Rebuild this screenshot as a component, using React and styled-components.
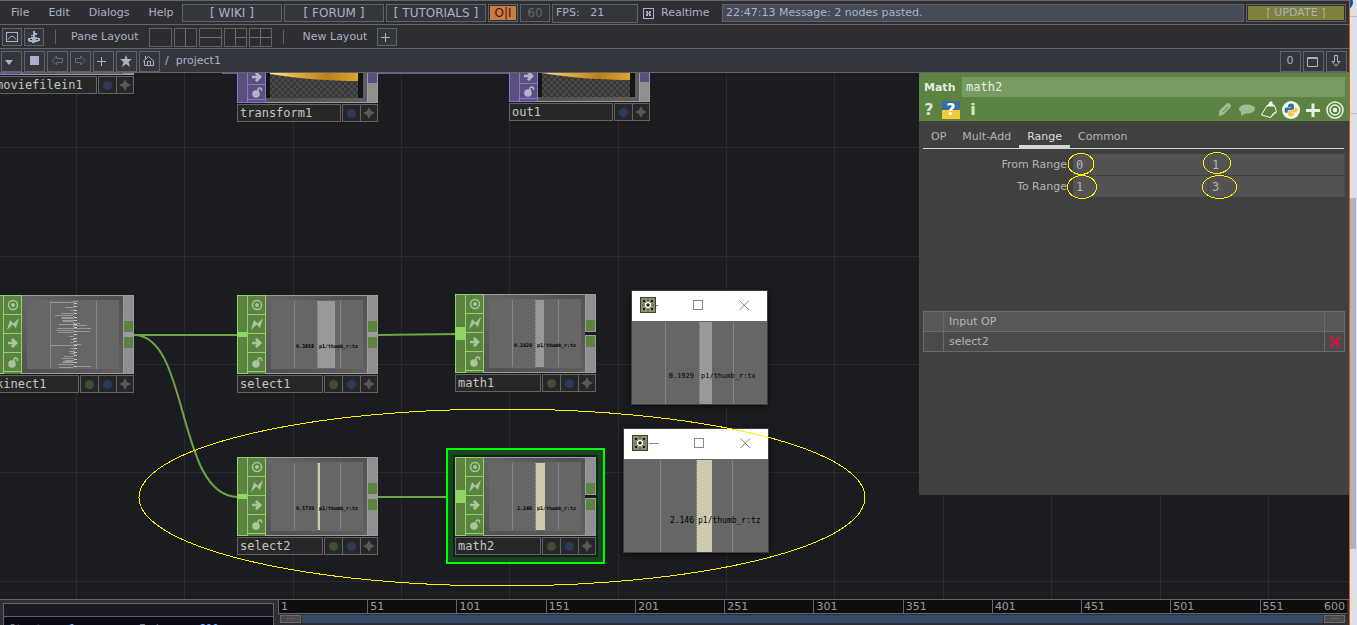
import React from "react";
import styled, { createGlobalStyle } from "styled-components";

const SANS = `"DejaVu Sans", Verdana, sans-serif`;
const MONO = `"DejaVu Sans Mono", monospace`;

const families = {
    chop: { fill: "#5c8341", edge: "#8fd566", icon: "#a9c69a" },
    top: { fill: "#5a5080", edge: "#8b76cc", icon: "#b7b0d0" },
};

const gridX = [76, 184, 293, 401, 509, 618, 726, 834, 943, 1051, 1160, 1268];
const gridY = [147, 256, 364, 472, 581];
const frames = [1, 51, 101, 151, 201, 251, 301, 351, 401, 451, 501, 551];

const nodes = [
    { name: "moviefilein1", x: -7, y: -4, family: "top" },
    { name: "transform1", x: 237, y: 24, family: "top" },
    { name: "out1", x: 509, y: 23, family: "top" },
    { name: "kinect1", x: -7, y: 295, family: "chop", noise: true },
    { name: "select1", x: 237, y: 295, family: "chop", value: "0.3858", channel: "p1/thumb_r:tx", bar: 17, color: "#999999" },
    { name: "math1", x: 455, y: 294, family: "chop", value: "0.1929", channel: "p1/thumb_r:tx", bar: 8, color: "#999999", multi: true },
    { name: "select2", x: 237, y: 457, family: "chop", value: "0.5739", channel: "p1/thumb_r:tz", bar: 2, color: "#cccbb0" },
    { name: "math2", x: 455, y: 457, family: "chop", value: "2.146", channel: "p1/thumb_r:tz", bar: 9, color: "#cccbb0", multi: true, selected: true },
];

// [y, start, end] of each channel line in the kinect1 thumbnail
const noiseRows = [
    [1, 46, 51], [2, 23, 46], [7, 38, 46], [10, 44, 48], [13, 34, 46], [15, 28, 46], [17, 34, 46],
    [18, 35, 46], [20, 35, 46], [21, 36, 46], [23, 46, 53], [24, 32, 46], [25, 46, 60], [28, 30, 64],
    [30, 29, 46], [31, 47, 63], [32, 31, 46], [36, 42, 46], [39, 44, 48], [42, 43, 47], [44, 46, 54],
    [45, 23, 46], [48, 43, 50], [51, 42, 48], [53, 43, 48], [56, 37, 46], [58, 35, 46], [60, 38, 46],
    [61, 36, 46], [62, 35, 47], [64, 31, 46], [66, 46, 64], [67, 32, 46],
];

const App = () => {
    return (
        <>
            <GlobalStyle />
            <Desktop>
                <Main>
                    <MenuBar />
                    <PaneBar />
                    <PathBar />
                    <Workspace>
                        <Network />
                        <Parameters />
                    </Workspace>
                    <Timeline />
                </Main>
                <Backdrop>
                    <BackdropBadge />
                    <BackdropHead />
                    <BackdropBody />
                    <BackdropThumb />
                </Backdrop>
            </Desktop>
        </>
    );
};

export default App;

function MenuBar() {
    return (
        <MenuRow>
            <Menus>
                <MenuButton>File</MenuButton>
                <MenuButton>Edit</MenuButton>
                <MenuButton>Dialogs</MenuButton>
                <MenuButton>Help</MenuButton>
            </Menus>
            <LinkButton href="#wiki">[ WIKI ]</LinkButton>
            <LinkButton href="#forum">[ FORUM ]</LinkButton>
            <LinkButton href="#tutorials">[ TUTORIALS ]</LinkButton>
            <PowerButton>O|I</PowerButton>
            <RateButton>60</RateButton>
            <Fps>FPS:&nbsp;&nbsp; 21</Fps>
            <Realtime>
                <RealtimeBox type="checkbox" defaultChecked />
                Realtime
            </Realtime>
            <Message>22:47:13 Message: 2 nodes pasted.</Message>
            <UpdateButton>[ UPDATE ]</UpdateButton>
        </MenuRow>
    );
}

function PaneBar() {
    const layouts = ["", "M11 0V18", "M0 9H22", "M11 0V18M11 9H22", "M11 0V18M0 9H22"];
    return (
        <PaneRow>
            <ToolButton aria-label="Perform">
                <svg width="14" height="14" fill="none" stroke="currentColor">
                    <rect x="1.5" y="2.5" width="11" height="9" />
                    <path d="M3 9.5L5.5 6.5H8.5L11 9.5" />
                </svg>
            </ToolButton>
            <ToolButton aria-label="Import">
                <svg width="14" height="14" fill="currentColor">
                    <path d="M6 1H8V3H10V5H8V7H10V8H13V11H11V12H8V13H5V12H2V11H1V8H4V7H6V6H4V5H6Z" />
                    <path d="M3 9.5H5M9 9.5H11" stroke="#35373f" />
                </svg>
            </ToolButton>
            <Divider />
            <BarText>Pane Layout</BarText>
            <Layouts>
                {layouts.map((d, i) => (
                    <LayoutButton key={i} aria-label={`Layout ${i + 1}`}>
                        <svg width="21" height="17" viewBox="0.5 0.5 21 17" fill="none" stroke="#6c6e74">
                            <path d={d} />
                        </svg>
                    </LayoutButton>
                ))}
            </Layouts>
            <Divider $wide />
            <BarText>New Layout</BarText>
            <ToolButton aria-label="Add layout">
                <Plus />
            </ToolButton>
        </PaneRow>
    );
}

function Plus() {
    return (
        <svg width="14" height="14" stroke="currentColor">
            <path d="M1 7.5H10M5.5 3V12" />
        </svg>
    );
}

function PathBar() {
    return (
        <PathRow>
            <PathButton aria-label="Pane type">
                <svg width="14" height="14" fill="currentColor"><path d="M1 6H9L5 11Z" /></svg>
            </PathButton>
            <PathButton aria-label="Stop">
                <svg width="14" height="14" fill="currentColor"><rect x="3" y="2" width="9" height="9" /></svg>
            </PathButton>
            <PathButton aria-label="Back" $dim>
                <svg width="14" height="14" fill="none" stroke="currentColor"><path d="M2 6.5L6.5 2V4.500H12.5V8.5H6.5V11Z" /></svg>
            </PathButton>
            <PathButton aria-label="Forward" $dim>
                <svg width="14" height="14" fill="none" stroke="currentColor"><path d="M12 6.5L7.5 2V4.500H2.500V8.5H7.5V11Z" /></svg>
            </PathButton>
            <PathButton aria-label="Add"><Plus /></PathButton>
            <PathButton aria-label="Bookmark">
                <svg width="14" height="14" fill="currentColor"><path d="M7 1L8.5 5H13L9.5 8L11 13L7 10L3 13L4.5 8L1 5H5.5Z" /></svg>
            </PathButton>
            <PathButton aria-label="Home">
                <svg width="14" height="14" fill="none" stroke="currentColor">
                    <path d="M1 7.5L6.5 2.5L12 7.5M2.5 7V11.5H11.5V7M5.5 11V7.5H8.5V11M3.5 5V2" />
                </svg>
            </PathButton>
            <Path>/&nbsp; project1</Path>
            <PathButton>0</PathButton>
            <PathButton aria-label="Maximize">
                <svg width="14" height="14" fill="none" stroke="currentColor"><path d="M1.5 3.5H11.5V12.5H1.5ZM1 4.5H12" /></svg>
            </PathButton>
            <PathButton aria-label="Collapse">
                <svg width="14" height="14" fill="none" stroke="currentColor"><path d="M5.5 1.5H8.5V7.5H11L7 12L3 7.5H5.5Z" /></svg>
            </PathButton>
        </PathRow>
    );
}

// canvas drawings use window coordinates, so the viewBox starts below the bars
function Network() {
    return (
        <Canvas>
            <Layer viewBox="0 73 1349 526">
                <g stroke="#2a2b31">
                    {gridX.map((x) => <path key={x} d={`M${x}.5 73V599`} />)}
                    {gridY.map((y) => <path key={y} d={`M0 ${y}.5H1349`} />)}
                </g>
                <path d="M222 73.5H509" stroke="#6f60a5" />
                <g fill="none" stroke="#6fa549" strokeWidth="2">
                    <path d="M134 335H238M378 335L456 334M378 497H456" />
                    <path d="M134 335C190 335 176 497 238 497" />
                </g>
            </Layer>
            <Plane>
                {nodes.map((node) => <Node key={node.name} {...node} />)}
                <Viewer x={632} y={218} width={135} height={113} value="0.1929" channel="p1/thumb_r:tx" bar={12} color="#999999"
                    lines={[33, 101]} zero={67} textY={57} size={7} valueEnd={62} labelX={69} short />
                <Viewer x={624} y={356} width={144} height={123} value="2.146" channel="p1/thumb_r:tz" bar={15} color="#cccbb0"
                    lines={[36, 108]} zero={72} textY={64} size={8} valueEnd={70} labelX={74} />
            </Plane>
            <Layer viewBox="0 73 1349 526">
                <ellipse cx="502" cy="497.5" rx="363" ry="88.5" fill="none" stroke="#fff200" shapeRendering="crispEdges" />
            </Layer>
        </Canvas>
    );
}

function Chart({ lines, zero, bar, color, value, channel, valueEnd, labelX, textY, size, height }) {
    return (
        <>
            {lines.map((x) => <path key={x} d={`M${x}.5 1V${height}`} stroke="#858585" />)}
            <rect x={zero + 1} y="1" width={bar} height={height - 1} fill={color} />
            <path d={`M${zero}.5 1V${height}`} stroke="#a0a0a0" strokeDasharray="1 1" />
            <g fontFamily={MONO} fontSize={size} fontWeight={size > 5 ? 400 : 700} fill="#000">
                <text x={valueEnd} y={textY} textAnchor="end">{value}</text>
                <text x={labelX} y={textY}>{channel}</text>
            </g>
        </>
    );
}

function NoiseChart() {
    return (
        <g>
            <path d="M23.5 1V69M69.5 1V69" stroke="#858585" />
            {noiseRows.map(([y, start, end]) => (
                <path key={y} d={`M${start} ${y}.5H${end}`} stroke="#999999" />
            ))}
            <path d="M46.5 2V67" stroke="#999999" strokeDasharray="1 1" />
            <path d="M48.5 3V67" stroke="#cccbb0" strokeWidth="3" strokeDasharray="1 2 1 3" />
        </g>
    );
}

function NodeIcon({ kind }) {
    return (
        <svg width="14" height="14" viewBox="0 0 14 14" fill="currentColor">
            {kind === "view" && (
                <>
                    <circle cx="7" cy="7" r="4.5" fill="none" stroke="currentColor" strokeWidth="1.5" />
                    <circle cx="7" cy="7" r="2" />
                </>
            )}
            {kind === "bolt" && <path d="M1 13L4 3L7.500 6.500L13 1L10 11L6.500 7.500Z" />}
            {kind === "arrow" && <path d="M2 5.800H6.500L5 3.500L7 2L12 7L7 12L5 10.500L6.500 8.200H2Z" />}
            {kind === "lock" && (
                <>
                    <circle cx="6" cy="9" r="3.8" />
                    <path d="M8 6V4A2 2 0 0 1 11.5 4V6" fill="none" stroke="currentColor" strokeWidth="1.5" />
                </>
            )}
        </svg>
    );
}

function Node({ name, x, y, family, selected, multi, noise, ...chart }) {
    const colors = families[family];
    const isTop = family === "top";
    const icons = isTop ? ["view", "bolt", "view", "arrow", "lock"] : ["view", "bolt", "arrow", "lock"];
    return (
        <NodeBox $selected={selected} style={{ left: x, top: y - 73 }}>
            <Tile>
                <InputStrip $colors={colors}>
                    {!isTop && !noise && <Connector $tall={multi} />}
                </InputStrip>
                <IconColumn $colors={colors} $row={isTop ? 14 : 18}>
                    {icons.map((kind, i) => <IconCell key={i}><NodeIcon kind={kind} /></IconCell>)}
                </IconColumn>
                <Thumb>
                    {isTop ? (
                        <svg width="101" height="77" viewBox="0 0 101 77">
                            <defs>
                                <pattern id={`check-${name}`} width="6" height="6" patternUnits="userSpaceOnUse">
                                    <rect width="6" height="6" fill="#4a4a4a" />
                                    <path d="M0 0H3V3H0ZM3 3H6V6H3Z" fill="#363636" />
                                </pattern>
                                <linearGradient id={`gold-${name}`} x2="1" y2="0">
                                    <stop offset="0" stopColor="#fff0a0" />
                                    <stop offset="0.25" stopColor="#e8b640" />
                                    <stop offset="0.65" stopColor="#b9801c" />
                                    <stop offset="1" stopColor="#dca52c" />
                                </linearGradient>
                            </defs>
                            <rect width="97" height="73" fill="#151515" />
                            <rect x="4" width="88" height="73" fill={`url(#check-${name})`} />
                            <path d="M4 48H92V56C66 56 35 54 4 49Z" fill={`url(#gold-${name})`} />
                        </svg>
                    ) : (
                        <svg width="101" height="77">
                            <g transform="translate(5 4)">
                                <rect width="92" height="69" fill="#666666" />
                                {noise ? (
                                    <NoiseChart />
                                ) : (
                                    <Chart {...chart} lines={[23, 69]} zero={46} valueEnd={43} labelX={48} textY={48} size={5} height={68} />
                                )}
                            </g>
                        </svg>
                    )}
                </Thumb>
                <OutputStrip $low={isTop}>
                    <Port $color={colors.fill} />
                    {!isTop && (
                        <>
                            <PortGap $split={multi} />
                            <Port $color={colors.fill} />
                        </>
                    )}
                </OutputStrip>
            </Tile>
            <NameRow>
                <NodeName>{name}</NodeName>
                <Flags>
                    {!isTop && <Flag><FlagDot $color="#3f4f33" /></Flag>}
                    <Flag><FlagDot $color="#2c3b5c" /></Flag>
                    <Flag>
                        <svg width="12" height="12" fill="#595959"><path d="M6 0L8 4L12 6L8 8L6 12L4 8L0 6L4 4Z" /></svg>
                    </Flag>
                </Flags>
            </NameRow>
        </NodeBox>
    );
}

function Viewer({ x, y, width, height, short, ...chart }) {
    return (
        <ViewerWindow style={{ left: x, top: y, width, height }}>
            <ViewerTitle>
                <svg width="28" height="16">
                    <path d={short ? "M16 8.5H18" : "M17 8.5H27"} stroke="#8a8a8a" />
                    <rect x="0.5" y="0.5" width="15" height="15" fill="#87926b" stroke="#3c4130" />
                    <path d="M8 0V16M0 8H16" stroke="#5d664a" />
                    <path d="M4 4L12 12M12 4L4 12" stroke="#1b1d16" />
                    <path d="M3 3H5V5H3ZM11 3H13V5H11ZM3 11H5V13H3ZM11 11H13V13H11Z" fill="#15160f" />
                    <circle cx="8" cy="8" r="2.5" fill="#222" stroke="#fff" strokeWidth="1.5" />
                </svg>
                <CaptionButton aria-label="Maximize">
                    <svg width="11" height="11" fill="none" stroke="#8a8a8a"><rect x="0.5" y="0.5" width="9" height="9" /></svg>
                </CaptionButton>
                <CaptionButton aria-label="Close">
                    <svg width="11" height="11" stroke="#8a8a8a"><path d="M0.5 0.5L10 10M10 0.5L0.5 10" /></svg>
                </CaptionButton>
            </ViewerTitle>
            <svg width={width} height={height - 30}>
                <Chart {...chart} height={height - 30} />
            </svg>
        </ViewerWindow>
    );
}

function Parameters() {
    return (
        <Panel>
            <PanelHead>
                <OpRow>
                    <OpType htmlFor="op-name">Math</OpType>
                    <OpName id="op-name" defaultValue="math2" />
                </OpRow>
                <HeadIcons>
                    <HeadButton>?</HeadButton>
                    <HeadButton $python>?</HeadButton>
                    <HeadButton>i</HeadButton>
                    <Spacer />
                    <HeadButton aria-label="Edit">
                        <svg width="18" height="18" fill="#a2bb92">
                            <path d="M3 10L10 3Q12 1 14 3Q16 5 14 7L7 14L3 15Z" />
                            <path d="M7 11L12 6" stroke="#5c8341" />
                        </svg>
                    </HeadButton>
                    <HeadButton aria-label="Comment">
                        <svg width="18" height="18" fill="#a2bb92">
                            <ellipse cx="9" cy="8" rx="8" ry="4.5" />
                            <path d="M3 10L3 15L8 12Z" />
                        </svg>
                    </HeadButton>
                    <HeadButton aria-label="Copy">
                        <svg width="18" height="18" fill="none" stroke="#f2f5ef">
                            <path d="M7 4.500L1.500 14L10.500 16.500L13.500 12L16.500 11L14.500 4.500" />
                            <path d="M10.500 16.500L16.500 11" />
                            <path d="M7 5L9 3L10 1H12L12 3L14.500 5Z" fill="#f2f5ef" />
                        </svg>
                    </HeadButton>
                    <HeadButton aria-label="Python">
                        <svg width="18" height="18">
                            <circle cx="9" cy="9" r="9" fill="#f5f5f2" />
                            <path d="M6 5Q6 2.5 9 2.5Q12 2.5 12 5V7Q12 9 10 9H7Q5.500 9 5.500 11V12Q2.500 12 2.500 9Q2.500 6.500 5 6.500H9V6H6Z" fill="#356f9f" />
                            <path d="M12 13Q12 15.500 9 15.500Q6 15.500 6 13V11.500Q6 9.500 8 9.500H11Q12.700 9.500 12.700 7.500V6Q15.500 6 15.500 9Q15.500 11.500 13 11.500H9V12H12Z" fill="#f6c83a" />
                        </svg>
                    </HeadButton>
                    <HeadButton aria-label="Add parameter">
                        <svg width="18" height="18" stroke="#e9efe5" strokeWidth="3"><path d="M2 9.500H16M9 2.500V16" /></svg>
                    </HeadButton>
                    <HeadButton aria-label="Target">
                        <svg width="18" height="18" fill="none" stroke="#e9efe5" strokeWidth="1.5">
                            <circle cx="9" cy="9" r="8" />
                            <circle cx="9" cy="9" r="5" />
                            <circle cx="9" cy="9" r="1.5" fill="#e9efe5" />
                        </svg>
                    </HeadButton>
                </HeadIcons>
            </PanelHead>
            <Tabs>
                <Tab>OP</Tab>
                <Tab>Mult-Add</Tab>
                <Tab $active>Range</Tab>
                <Tab>Common</Tab>
            </Tabs>
            <Fields>
                <FieldRow>
                    <FieldLabel htmlFor="from-low">From Range</FieldLabel>
                    <FieldInput id="from-low" defaultValue="0" />
                    <FieldInput aria-label="From Range high" defaultValue="1" />
                </FieldRow>
                <FieldRow>
                    <FieldLabel htmlFor="to-low">To Range</FieldLabel>
                    <FieldInput id="to-low" defaultValue="1" />
                    <FieldInput aria-label="To Range high" defaultValue="3" />
                </FieldRow>
                <Marks width="200" height="50" fill="none" stroke="#fff200" shapeRendering="crispEdges">
                    <ellipse cx="21" cy="14" rx="13" ry="10.5" />
                    <ellipse cx="157" cy="13" rx="13.5" ry="10.5" />
                    <ellipse cx="22" cy="37" rx="14.500" ry="11.500" />
                    <ellipse cx="159.5" cy="37" rx="17" ry="11.500" />
                </Marks>
            </Fields>
            <InputTable>
                <thead>
                    <tr>
                        <SlotHead />
                        <InputHead>Input OP</InputHead>
                        <SlotHead />
                    </tr>
                </thead>
                <tbody>
                    <tr>
                        <InputCell />
                        <InputCell>select2</InputCell>
                        <InputCell>
                            <RemoveButton aria-label="Remove select2">
                                <svg width="14" height="14" stroke="#c41e45" strokeWidth="3"><path d="M2 2L12 12M12 2L2 12" /></svg>
                            </RemoveButton>
                        </InputCell>
                    </tr>
                </tbody>
            </InputTable>
        </Panel>
    );
}

function Timeline() {
    return (
        <TimelineRow>
            <RangeBox>
                <RangeHead />
                <RangeValues>
                    <span>Start:</span>
                    <b>1</b>
                    <span>End:</span>
                    <b>600</b>
                </RangeValues>
            </RangeBox>
            <Track>
                <Ruler>
                    {frames.map((frame) => <Tick key={frame} $last={frame === 551}>{frame}</Tick>)}
                    <LastFrame>600</LastFrame>
                </Ruler>
                <RangeBar>
                    <Handle aria-label="Range start">···</Handle>
                    <RangeFill />
                    <Handle aria-label="Range end">···</Handle>
                </RangeBar>
            </Track>
        </TimelineRow>
    );
}

const GlobalStyle = createGlobalStyle`
    * {
        box-sizing: border-box;
    }

    body {
        margin: 0;
        overflow: hidden;
        font: 11px/16px ${SANS};
        color: #a9b2c8;
    }

    button,
    input {
        margin: 0;
        padding: 0;
        border: 0;
        border-radius: 0;
        background: none;
        font: inherit;
        color: inherit;
        outline: none;
    }

    svg {
        display: block;
    }
`;

const Desktop = styled.div`
    display: flex;
    height: 100vh;
    background: #e0e0e0;
`;

const Main = styled.main`
    flex: 1;
    min-width: 0;
    display: flex;
    flex-direction: column;
    background: #2e2f33;
    border-right: 1px solid #c9602c;
`;

const Backdrop = styled.div`
    position: relative;
    width: 7px;
    display: flex;
    flex-direction: column;
    overflow: hidden;
`;

const BackdropBadge = styled.div`
    position: absolute;
    left: -8px;
    top: -4px;
    width: 11px;
    height: 13px;
    border-radius: 50%;
    background: #0b5ca8;
`;

const BackdropHead = styled.div`
    height: 17px;
    border-bottom: 1px solid #bfbfbf;
`;

const BackdropBody = styled.div`
    height: 97px;
    border-bottom: 1px solid #bfbfbf;
`;

const BackdropThumb = styled.div`
    width: 6px;
    height: 351px;
    margin-top: 84px;
    background: #b4b4b4;
`;

const Bar = styled.div`
    display: flex;
    align-items: center;
    flex-shrink: 0;
    height: 24px;
    padding-top: 1px;
    border-top: 1px solid #63656a;
`;

const MenuRow = styled(Bar)`
    gap: 2px;
    padding-right: 3px;
`;

const Menus = styled.nav`
    display: flex;
    gap: 19px;
    width: 180px;
    padding-left: 11px;
`;

const MenuButton = styled.button`
    white-space: nowrap;
`;

const LinkButton = styled.a`
    width: 100px;
    height: 18px;
    border: 1px solid #606268;
    background: #34363e;
    color: #a9b2c8;
    font-size: 12px;
    text-align: center;
    text-decoration: none;
    white-space: nowrap;
`;

const PowerButton = styled.button`
    width: 30px;
    height: 18px;
    border: 1px solid #606268;
    background: #c47f45;
    box-shadow: inset 0 0 0 1px #2e2f33;
    color: #5a0a0a;
    font-size: 12px;
`;

const RateButton = styled(PowerButton)`
    background: #34363e;
    color: #62656f;
`;

const Fps = styled.div`
    width: 86px;
    height: 19px;
    padding-left: 3px;
    border: 1px solid #606268;
    background: #34363e;
`;

const Realtime = styled.label`
    display: flex;
    align-items: center;
    gap: 7px;
    width: 80px;
    padding-left: 3px;
`;

const RealtimeBox = styled.input`
    appearance: none;
    width: 11px;
    height: 11px;
    border: 1px solid #a9b2c8;
    background: conic-gradient(#a9b2c8 0 0) 2px 2px / 2px 2px no-repeat, conic-gradient(#a9b2c8 0 0) 5px 2px / 2px 2px no-repeat,
        conic-gradient(#a9b2c8 0 0) 3px 4px / 3px 1px no-repeat, conic-gradient(#a9b2c8 0 0) 2px 5px / 2px 2px no-repeat,
        conic-gradient(#a9b2c8 0 0) 5px 5px / 2px 2px no-repeat;
`;

const Message = styled.div`
    flex: 1;
    height: 18px;
    padding-left: 3px;
    border: 1px solid #606268;
    background: #454a57;
    white-space: nowrap;
`;

const UpdateButton = styled(PowerButton)`
    width: 100px;
    background: #80803a;
    color: #a9b2c8;
    font-size: 11px;
`;

const PaneRow = styled(Bar)`
    padding-left: 2px;
`;

const ToolButton = styled.button`
    display: flex;
    align-items: center;
    justify-content: center;
    width: 20px;
    height: 18px;
    margin-right: 2px;
    border: 1px solid #606268;
    background: #34363e;
`;

const Divider = styled.div`
    width: 1px;
    height: 14px;
    margin: ${(props) => (props.$wide ? "0 19px 0 11px" : "0 15px 0 9px")};
    background: #606268;
`;

const BarText = styled.span`
    margin-right: 10px;
    white-space: nowrap;
`;

const Layouts = styled.div`
    display: flex;
    gap: 2px;
`;

const LayoutButton = styled.button`
    width: 23px;
    height: 19px;
    border: 1px solid #606268;
    background: #2c2d31;
`;

const PathRow = styled(Bar)`
    gap: 2px;
    height: 25px;
    padding: 1px 2px 0 1px;
    border-bottom: 1px solid #63656a;
    background: #34363e;
`;

const PathButton = styled.button`
    display: flex;
    align-items: center;
    justify-content: center;
    width: 21px;
    height: 21px;
    padding-right: 1px;
    border: 1px solid #606268;
    color: ${(props) => (props.$dim ? "#666973" : "#a9b2c8")};
`;

const Path = styled.div`
    flex: 1;
    padding-left: 3px;
`;

const Workspace = styled.section`
    position: relative;
    flex: 1;
    display: flex;
    justify-content: flex-end;
    align-items: flex-start;
    min-height: 0;
    overflow: hidden;
    background: #1b1c20;
`;

const Canvas = styled.div`
    position: absolute;
    inset: 0;
`;

const Layer = styled.svg.attrs({ preserveAspectRatio: "xMinYMin slice" })`
    position: absolute;
    inset: 0;
    width: 100%;
    height: 100%;
    pointer-events: none;
`;

const Plane = styled.div`
    position: absolute;
    inset: 0;
`;

const NodeBox = styled.div`
    position: absolute;
    width: 141px;
    background: #1b1c20;
    box-shadow: ${(props) => (props.$selected ? "0 0 0 2px #1b1c20, 0 0 0 7px #15451a, 0 0 0 9px #00ff00" : "none")};
`;

const Tile = styled.div`
    display: flex;
    height: 79px;
    background: #575757;
`;

const InputStrip = styled.div`
    display: flex;
    align-items: center;
    width: 10px;
    border: 1px solid ${(props) => props.$colors.edge};
    border-right: 0;
    background: ${(props) => props.$colors.fill};
`;

const Connector = styled.div`
    width: 9px;
    height: ${(props) => (props.$tall ? 13 : 5)}px;
    background: #8fd566;
`;

const IconColumn = styled.div`
    display: grid;
    grid-template-columns: 17px;
    grid-auto-rows: ${(props) => props.$row}px;
    gap: 1px;
    align-content: start;
    width: 19px;
    padding-left: 1px;
    border: 1px solid ${(props) => props.$colors.edge};
    border-width: 1px 1px 1px 0;
    background: ${(props) => props.$colors.edge};
    color: ${(props) => props.$colors.icon};

    > * {
        background: ${(props) => props.$colors.fill};
    }

    &::after {
        content: "";
        height: 2px;
        background: ${(props) => props.$colors.fill};
    }
`;

const IconCell = styled.div`
    display: flex;
    align-items: center;
    justify-content: center;
    overflow: hidden;
`;

const Thumb = styled.div`
    flex: 1;
    min-width: 0;
    border: 1px solid #9b9ba1;
    border-width: 1px 0;
    background: linear-gradient(135deg, #666666, #515151 50%, #606060);
    overflow: hidden;
`;

const OutputStrip = styled.div`
    display: flex;
    flex-direction: column;
    justify-content: ${(props) => (props.$low ? "flex-end" : "center")};
    width: 11px;
    padding-bottom: ${(props) => (props.$low ? "19px" : "0")};
    border: 1px solid #9b9ba1;
    background: #8f8f8f;
`;

const Port = styled.div`
    height: 11px;
    background: ${(props) => props.$color};
`;

const PortGap = styled.div`
    height: 5px;
    margin: 0 -1px;
    border: 1px solid #9b9ba1;
    border-width: 1px 0;
    background: ${(props) => (props.$split ? "#1b1c20" : "#9b9ba1")};
`;

const NameRow = styled.div`
    display: flex;
    gap: 1px;
    height: 18px;
    margin-top: 1px;
`;

const NodeName = styled.div`
    flex: 1;
    min-width: 0;
    padding-left: 2px;
    border: 1px solid #626367;
    background: #262828;
    color: #c4c4c4;
    font-family: ${MONO};
    font-size: 12px;
`;

const Flags = styled.div`
    display: flex;
    border: 1px solid #626367;
    background: #262828;
`;

const Flag = styled.div`
    display: flex;
    align-items: center;
    justify-content: center;
    width: 17px;

    & + & {
        width: 18px;
        border-left: 1px solid #626367;
    }

    &:last-child {
        width: 17px;
    }
`;

const FlagDot = styled.div`
    width: 9px;
    height: 9px;
    border-radius: 50%;
    background: ${(props) => props.$color};
`;

const ViewerWindow = styled.div`
    position: absolute;
    background: #666666;
    box-shadow: 0 0 0 1px #3d3d40, 0 2px 6px 1px rgba(0, 0, 0, 0.6);
`;

const ViewerTitle = styled.div`
    display: grid;
    grid-template-columns: 1fr 46px 46px;
    align-items: center;
    height: 30px;
    padding: 0 0 2px 8px;
    background: #ffffff;
`;

const CaptionButton = styled.button`
    display: flex;
    justify-content: center;
`;

const Panel = styled.aside`
    position: relative;
    width: 430px;
    min-height: 422px;
    background: #404040;
    color: #b4b4b4;
`;

const PanelHead = styled.header`
    height: 48px;
    padding: 4px 4px 0 5px;
    background: #5c8341;
`;

const OpRow = styled.div`
    display: flex;
    align-items: center;
    gap: 8px;
`;

const OpType = styled.label`
    width: 30px;
    padding-top: 1px;
    font-weight: 700;
    color: #e6ece2;
`;

const OpName = styled.input`
    flex: 1;
    min-width: 0;
    height: 20px;
    padding-left: 4px;
    background: #769a5f;
    font-family: ${MONO};
    font-size: 12px;
    color: #e6ece2;
`;

const HeadIcons = styled.div`
    display: flex;
    align-items: center;
    gap: 4px;
    height: 24px;
    padding: 2px 1px 0 0;
`;

const HeadButton = styled.button`
    width: 18px;
    height: 18px;
    background: ${(props) => (props.$python ? "linear-gradient(#356f9f 50%, #f6c83a 50%)" : "none")};
    color: ${(props) => (props.$python ? "#ffffff" : "#d9e4d2")};
    font-size: 16px;
    font-weight: 700;
    line-height: 18px;

    &:first-child {
        width: 14px;
        padding-right: 4px;
    }
`;

const Spacer = styled.div`
    flex: 1;
`;

const Tabs = styled.nav`
    display: flex;
    height: 28px;
    margin: 0 5px 0 4px;
    border-bottom: 1px solid #d5d5d5;
`;

const Tab = styled.button`
    height: 27px;
    padding: ${(props) => (props.$active ? "7px 8px 0" : "4px 8px 0")};
    border-bottom: ${(props) => (props.$active ? "3px solid #d5d5d5" : "0")};
    color: ${(props) => (props.$active ? "#dedede" : "#b4b4b4")};
    white-space: nowrap;
`;

const Fields = styled.div`
    position: relative;
    display: grid;
    gap: 2px;
    padding: 5px 4px 0;
`;

const FieldRow = styled.div`
    display: grid;
    grid-template-columns: 150px 1fr 1fr;
    height: 20px;
`;

const FieldLabel = styled.label`
    padding: 1px 6px 0 0;
    line-height: 20px;
    text-align: right;
`;

const FieldInput = styled.input`
    min-width: 0;
    padding: 1px 0 0 3px;
    border-right: 1px solid #4b4b4b;
    background: #535353;
    font-family: ${MONO};
    font-size: 12px;
`;

const Marks = styled.svg`
    position: absolute;
    left: 141px;
    top: 1px;
    pointer-events: none;
`;

const InputTable = styled.table`
    width: calc(100% - 8px);
    margin: 115px 4px 0;
    border-collapse: collapse;
    table-layout: fixed;

    th,
    td {
        height: 20px;
        padding: 0 0 0 5px;
        border: 1px solid #6b6b6b;
        line-height: 18px;
        text-align: left;
        font-weight: 400;
    }
`;

const SlotHead = styled.th`
    width: 20px;
    background: #585858;
`;

const InputHead = styled.th`
    background: #585858;
`;

const InputCell = styled.td`
    background: #4b4b4b;
`;

const RemoveButton = styled.button`
    display: block;
    margin-left: -2px;
`;

const TimelineRow = styled.footer`
    display: flex;
    flex-shrink: 0;
    height: 26px;
    overflow: hidden;
    border-top: 1px solid #63656a;
`;

const RangeBox = styled.div`
    width: 278px;
    padding: 3px 4px 0 3px;
`;

const RangeHead = styled.div`
    height: 14px;
    border: 1px solid #606268;
    background: #1a1a23;
`;

const RangeValues = styled.div`
    display: grid;
    grid-template-columns: 60px 70px 60px 60px;
    height: 40px;
    padding: 4px 5px;
    border: 1px solid #606268;
    border-top: 0;
    background: #0b0914;
    color: #78828a;
    font-family: ${MONO};

    b {
        color: #77a3ee;
    }
`;

const Track = styled.div`
    flex: 1;
    min-width: 0;
    padding-right: 2px;
`;

const Ruler = styled.div`
    position: relative;
    display: flex;
    height: 14px;
    border-bottom: 1px solid #63656a;
    background: #0e0e0e;
    color: #9a9a9a;
    line-height: 13px;
`;

const Tick = styled.span`
    flex: ${(props) => (props.$last ? 49 : 50)} 0 0;
    padding-left: 2px;
    border-left: 1px solid #63656a;
`;

const LastFrame = styled.span`
    position: absolute;
    right: 2px;
`;

const RangeBar = styled.div`
    display: flex;
    gap: 1px;
    height: 11px;
    padding: 1px 2px;
`;

const Handle = styled.button`
    width: 21px;
    height: 8px;
    border: 1px solid #6b6b6b;
    background: #4a4a4a;
    color: #8a8a8a;
    font-size: 9px;
    line-height: 6px;
`;

const RangeFill = styled.div`
    flex: 1;
    height: 8px;
    background: #37486b;
`;
